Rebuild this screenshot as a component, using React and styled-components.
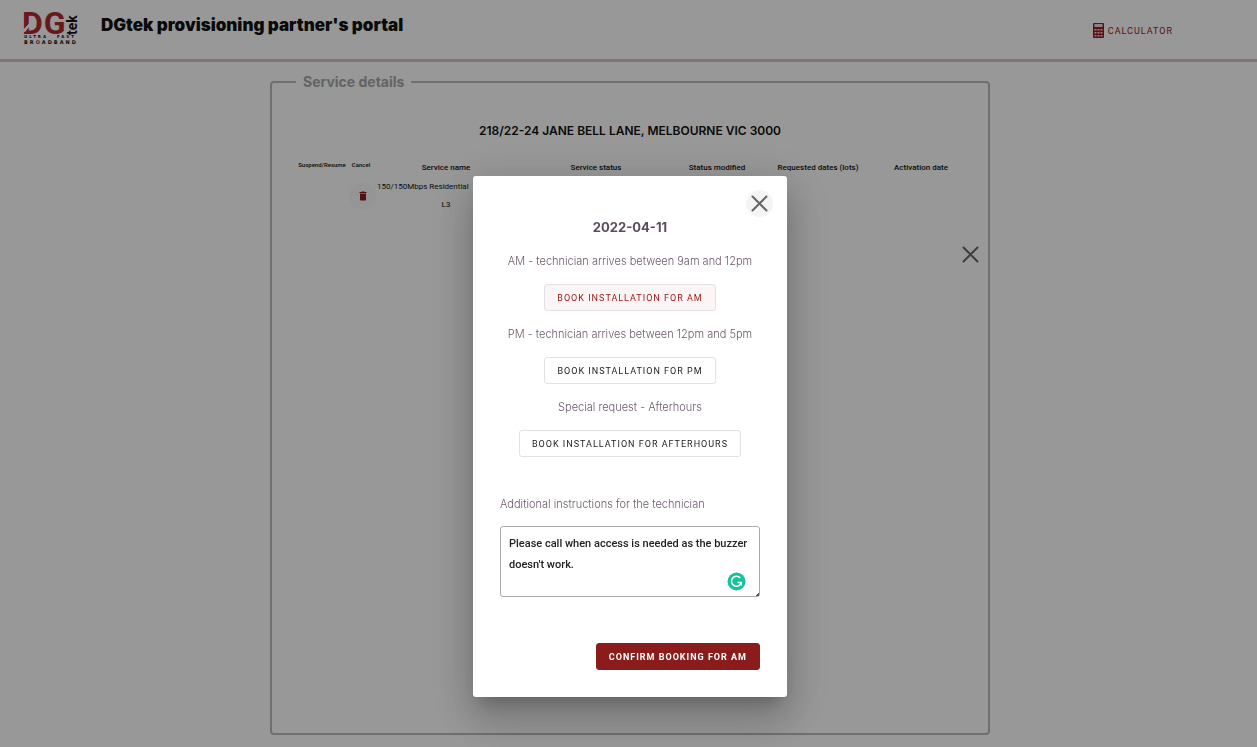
import { useState } from "react";
import styled, { createGlobalStyle } from "styled-components";
import { MdDelete } from "react-icons/md";

const GlobalStyle = createGlobalStyle`
  * {
    box-sizing: border-box;
  }

  body {
    margin: 0;
    background: #fdfdfd;
    color: #111;
    font-family: Inter, "Open Sans", sans-serif;
  }

  button {
    cursor: pointer;
  }
`;

const Header = styled.header`
  display: flex;
  align-items: center;
  height: 62px;
  padding: 0 84px 0 24px;
  border-bottom: 3px solid #e0bebf;
`;

const LogoLink = styled.a`
  display: flex;
  margin-right: 23px;
  padding-bottom: 2px;
`;

const LogoSvg = styled.svg`
  overflow: visible;
`;

const Title = styled.h1`
  flex: 1;
  margin: 0;
  padding-bottom: 10px;
  font-size: 17px;
  font-weight: 900;
  line-height: 24px;
`;

const NavLink = styled.a`
  display: flex;
  align-items: center;
  gap: 4px;
  padding-top: 2px;
  color: #991b1e;
  font-family: Roboto, sans-serif;
  font-size: 9px;
  letter-spacing: 1px;
  text-decoration: none;
  text-transform: uppercase;
`;

const Main = styled.main`
  display: flex;
  justify-content: center;
  padding: 10px 0 12px 3px;
`;

const Details = styled.fieldset`
  width: 720px;
  min-height: 663px;
  margin: 0;
  padding: 31px 4px 0 23px;
  border: 2px solid #bababa;
  border-radius: 4px;
`;

const Legend = styled.legend`
  margin-left: 1px;
  padding: 0 7px;
  color: #a6a6a6;
  font-size: 14px;
  font-weight: 700;
  line-height: 20px;
`;

const Address = styled.h2`
  margin: 0 19px 19px 0;
  font-size: 12px;
  font-weight: 600;
  line-height: 16px;
  text-align: center;
  text-transform: uppercase;
`;

const Services = styled.table`
  width: 672px;
  border-collapse: collapse;
  table-layout: fixed;
  font-family: Roboto, sans-serif;
  font-size: 8px;
  line-height: 18px;
  text-align: center;
`;

const Th = styled.th`
  width: ${(props) => props.$width}px;
  padding: 0;
  font-size: ${(props) => (props.$small ? 6 : 8)}px;
  font-weight: 500;
  line-height: ${(props) => (props.$small ? 14 : 20)}px;
  vertical-align: top;
  white-space: nowrap;
`;

const Td = styled.td`
  padding: 0;
  vertical-align: middle;
`;

const ServiceLine = styled.div`
  padding-left: ${(props) => (props.$align === "left" ? 4 : 0)}px;
  text-align: ${(props) => props.$align};
  white-space: nowrap;
`;

const RoundButton = styled.button`
  display: inline-flex;
  align-items: center;
  justify-content: center;
  width: 27px;
  height: 27px;
  padding: 0;
  border: 0;
  border-radius: 50%;
  background: ${(props) => props.$background || "#f4f4f4"};
  color: ${(props) => props.$color || "#666"};
  vertical-align: middle;
`;

const CloseRow = styled.div`
  display: flex;
  justify-content: flex-end;
  padding-top: ${(props) => props.$top || 0}px;
`;

const Overlay = styled.div`
  position: fixed;
  inset: 0;
  display: flex;
  justify-content: center;
  align-items: flex-start;
  padding: 176px 0 0 3px;
  background: rgba(0, 0, 0, 0.4);
`;

const Modal = styled.section`
  width: 314px;
  padding: 14px 14px 27px;
  border-radius: 3px;
  background: #fff;
  color: #6b5a6b;
  box-shadow:
    0 11px 15px -7px rgba(0, 0, 0, 0.2),
    0 24px 38px 3px rgba(0, 0, 0, 0.14),
    0 9px 46px 8px rgba(0, 0, 0, 0.12);
`;

const ModalBody = styled.div`
  padding: 0 13px;
`;

const DateTitle = styled.h3`
  margin: 0 0 14px;
  color: #5c4b5e;
  font-size: 13px;
  font-weight: 700;
  line-height: 20px;
  text-align: center;
`;

const Slot = styled.div`
  display: flex;
  flex-direction: column;
  align-items: center;
  gap: 13px;
  margin-bottom: 13px;
`;

const Text = styled.p`
  margin: 0;
  font-size: 11px;
  font-weight: 300;
  line-height: 20px;
  white-space: nowrap;
`;

const Button = styled.button`
  height: 27px;
  padding: 0 12px;
  border: 1px solid #e3e1e3;
  border-radius: 3px;
  background: ${(props) => (props.$active ? "#fcf5f5" : "#fff")};
  color: ${(props) => (props.$active ? "#9c1414" : "#222")};
  font-family: Roboto, sans-serif;
  font-size: 9px;
  font-weight: 400;
  letter-spacing: 1px;
  text-transform: uppercase;
  white-space: nowrap;
`;

const ConfirmButton = styled(Button)`
  border-color: #8a1c1c;
  background: #8a1c1c;
  color: #fff;
  font-weight: 700;
`;

const Label = styled.label`
  display: block;
  margin: 37px 0 12px;
  font-size: 11px;
  font-weight: 300;
  line-height: 20px;
`;

const TextBox = styled.div`
  position: relative;
  height: 71px;
  margin-bottom: 46px;
`;

const Textarea = styled.textarea`
  display: block;
  width: 100%;
  height: 71px;
  padding: 6px 8px;
  border: 1px solid #aaa;
  border-radius: 3px;
  background: #fff;
  color: #222;
  font-family: Roboto, sans-serif;
  font-size: 11px;
  font-weight: 500;
  line-height: 21px;
  outline: none;

  &::-webkit-resizer {
    background: linear-gradient(135deg, transparent 88%, #555 88%);
  }
`;

const Checker = styled.svg`
  position: absolute;
  right: 14px;
  bottom: 6px;
`;

const Actions = styled.div`
  display: flex;
  justify-content: flex-end;
`;

const columns = [
  { name: "Suspend/Resume", width: 54, small: true },
  { name: "Cancel", width: 24, small: true },
  { name: "Service name", width: 146 },
  { name: "Service status", width: 154 },
  { name: "Status modified", width: 88 },
  { name: "Requested dates (lots)", width: 114 },
  { name: "Activation date", width: 92 },
];

const slots = [
  { id: "AM", text: "AM - technician arrives between 9am and 12pm" },
  { id: "PM", text: "PM - technician arrives between 12pm and 5pm" },
  { id: "afterhours", text: "Special request - Afterhours" },
];

function Logo() {
  return (
    <LogoSvg width="54" height="35" viewBox="0 0 54 35" role="img" aria-label="DGtek">
      <text x="-2" y="23" fill="#b02a2e" fontFamily="Roboto" fontSize="32" fontWeight="700" letterSpacing="1">
        DG
      </text>
      <path d="M-1 19 L9 8 V11 L1 21 H-1 Z" fill="#fdfdfd" />
      <text
        transform="translate(53 24) rotate(-90)"
        fill="#151515"
        fontFamily="Roboto"
        fontSize="14"
        fontWeight="700"
      >
        tek
      </text>
      <g fill="#111" fontFamily="DejaVu Sans" fontSize="4" fontWeight="700" letterSpacing="2">
        <text x="0" y="27">ULTRA</text>
        <text x="33" y="27">FAST</text>
      </g>
      <text x="0" y="33" fill="#111" fontFamily="DejaVu Sans" fontSize="5" fontWeight="700" letterSpacing="2">
        BR<tspan fill="#b02a2e">O</tspan>ADBAND
      </text>
    </LogoSvg>
  );
}

function CalculatorIcon() {
  return (
    <svg width="11" height="15" viewBox="0 0 11 15" aria-hidden="true">
      <rect width="11" height="15" rx="1" fill="#991b1e" />
      <path
        d="M1.5 1h8v3h-8zM1.5 6h2v1.6h-2zM4.5 6h2v1.6h-2zM7.5 6h2v1.6h-2zM1.5 9h2v1.6h-2zM4.5 9h2v1.6h-2zM7.5 9h2v1.6h-2zM1.5 12h2v1.6h-2zM4.5 12h2v1.6h-2zM7.5 12h2v1.6h-2z"
        fill="#f0dada"
      />
    </svg>
  );
}

function CloseIcon() {
  return (
    <svg width="17" height="17" viewBox="0 0 17 17" aria-hidden="true">
      <path d="M1.5 1.5l14 14M15.5 1.5l-14 14" stroke="currentColor" strokeWidth="2" strokeLinecap="round" />
    </svg>
  );
}

function ServiceDetails() {
  return (
    <Details>
      <Legend>Service details</Legend>
      <Address>218/22-24 Jane Bell Lane, Melbourne VIC 3000</Address>
      <Services>
        <thead>
          <tr>
            {columns.map((col) => (
              <Th key={col.name} $width={col.width} $small={col.small}>
                {col.name}
              </Th>
            ))}
          </tr>
        </thead>
        <tbody>
          <tr>
            <Td />
            <Td>
              <RoundButton $color="#8a1c1c" $background="#f8f8f8" aria-label="Cancel service">
                <MdDelete size={12} />
              </RoundButton>
            </Td>
            <Td>
              <ServiceLine $align="left">150/150Mbps Residential</ServiceLine>
              <ServiceLine $align="center">L3</ServiceLine>
            </Td>
            <Td />
            <Td />
            <Td />
            <Td />
          </tr>
        </tbody>
      </Services>
      <CloseRow $top={27}>
        <RoundButton $background="transparent" aria-label="Close details">
          <CloseIcon />
        </RoundButton>
      </CloseRow>
    </Details>
  );
}

function BookingModal() {
  const [selected, setSelected] = useState("AM");

  return (
    <Overlay>
      <Modal role="dialog" aria-labelledby="booking-date">
        <CloseRow>
          <RoundButton aria-label="Close">
            <CloseIcon />
          </RoundButton>
        </CloseRow>
        <ModalBody>
          <DateTitle id="booking-date">2022-04-11</DateTitle>
          {slots.map((slot) => (
            <Slot key={slot.id}>
              <Text>{slot.text}</Text>
              <Button $active={slot.id === selected} onClick={() => setSelected(slot.id)}>
                Book installation for {slot.id}
              </Button>
            </Slot>
          ))}
          <Label htmlFor="instructions">Additional instructions for the technician</Label>
          <TextBox>
            <Textarea
              id="instructions"
              spellCheck={false}
              defaultValue="Please call when access is needed as the buzzer doesn't work."
            />
            <Checker width="19" height="19" viewBox="0 0 19 19" aria-hidden="true">
              <circle cx="9.5" cy="9.5" r="9" fill="#15c39a" />
              <path
                d="M13.3 6.1A5 5 0 1 0 14.3 10.5H10.5M14.3 10.5V13.6"
                fill="none"
                stroke="#fff"
                strokeWidth="1.5"
              />
            </Checker>
          </TextBox>
          <Actions>
            <ConfirmButton>Confirm booking for {selected}</ConfirmButton>
          </Actions>
        </ModalBody>
      </Modal>
    </Overlay>
  );
}

function App() {
  return (
    <>
      <GlobalStyle />
      <Header>
        <LogoLink href="#home">
          <Logo />
        </LogoLink>
        <Title>DGtek provisioning partner's portal</Title>
        <NavLink href="#calculator">
          <CalculatorIcon />
          Calculator
        </NavLink>
      </Header>
      <Main>
        <ServiceDetails />
      </Main>
      <BookingModal />
    </>
  );
}

export default App;
